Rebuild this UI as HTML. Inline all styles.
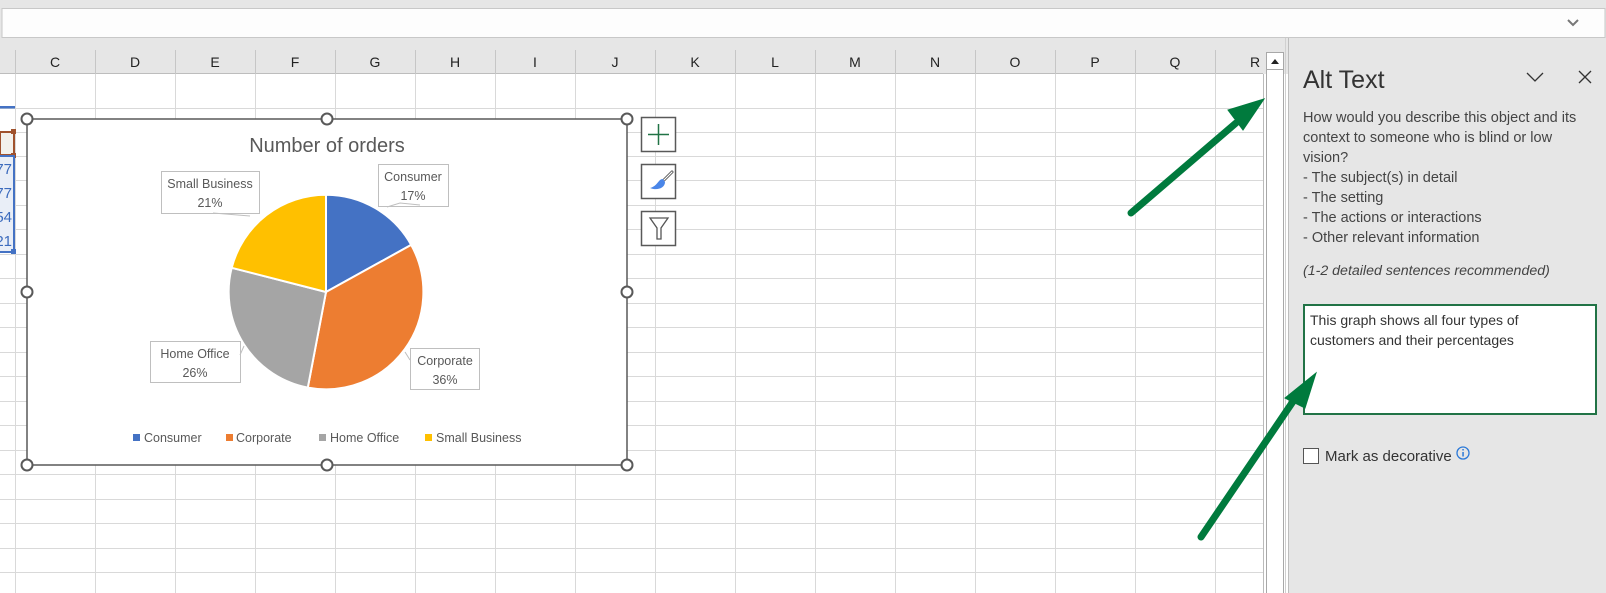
<!DOCTYPE html>
<html><head><meta charset="utf-8"><style>
html,body{margin:0;padding:0;width:1606px;height:593px;overflow:hidden;background:#fff;font-family:"Liberation Sans",sans-serif}
svg{display:block}
</style></head><body>
<svg width="1606" height="593" viewBox="0 0 1606 593" xmlns="http://www.w3.org/2000/svg" font-family="Liberation Sans, sans-serif">
<rect x="0" y="0" width="1606" height="74" fill="#e6e6e6"/>
<rect x="2" y="8.5" width="1603" height="29" fill="#fdfdfd" stroke="#c8c8c8"/>
<path d="M1568 20 l5 5 l5 -5" fill="none" stroke="#777" stroke-width="2"/>
<line x1="0" y1="73.5" x2="1263" y2="73.5" stroke="#bdbdbd"/>
<g stroke="#c6c6c6">
<line x1="15.5" y1="50" x2="15.5" y2="74"/><line x1="95.5" y1="50" x2="95.5" y2="74"/><line x1="175.5" y1="50" x2="175.5" y2="74"/><line x1="255.5" y1="50" x2="255.5" y2="74"/><line x1="335.5" y1="50" x2="335.5" y2="74"/><line x1="415.5" y1="50" x2="415.5" y2="74"/><line x1="495.5" y1="50" x2="495.5" y2="74"/><line x1="575.5" y1="50" x2="575.5" y2="74"/><line x1="655.5" y1="50" x2="655.5" y2="74"/><line x1="735.5" y1="50" x2="735.5" y2="74"/><line x1="815.5" y1="50" x2="815.5" y2="74"/><line x1="895.5" y1="50" x2="895.5" y2="74"/><line x1="975.5" y1="50" x2="975.5" y2="74"/><line x1="1055.5" y1="50" x2="1055.5" y2="74"/><line x1="1135.5" y1="50" x2="1135.5" y2="74"/><line x1="1215.5" y1="50" x2="1215.5" y2="74"/>
</g>
<g font-size="14" fill="#222" text-anchor="middle">
<text x="55" y="67">C</text><text x="135" y="67">D</text><text x="215" y="67">E</text><text x="295" y="67">F</text><text x="375" y="67">G</text><text x="455" y="67">H</text><text x="535" y="67">I</text><text x="615" y="67">J</text><text x="695" y="67">K</text><text x="775" y="67">L</text><text x="855" y="67">M</text><text x="935" y="67">N</text><text x="1015" y="67">O</text><text x="1095" y="67">P</text><text x="1175" y="67">Q</text><text x="1255" y="67">R</text>
</g>
<g stroke="#d9d9d9">
<line x1="15.5" y1="74" x2="15.5" y2="593"/><line x1="95.5" y1="74" x2="95.5" y2="593"/><line x1="175.5" y1="74" x2="175.5" y2="593"/><line x1="255.5" y1="74" x2="255.5" y2="593"/><line x1="335.5" y1="74" x2="335.5" y2="593"/><line x1="415.5" y1="74" x2="415.5" y2="593"/><line x1="495.5" y1="74" x2="495.5" y2="593"/><line x1="575.5" y1="74" x2="575.5" y2="593"/><line x1="655.5" y1="74" x2="655.5" y2="593"/><line x1="735.5" y1="74" x2="735.5" y2="593"/><line x1="815.5" y1="74" x2="815.5" y2="593"/><line x1="895.5" y1="74" x2="895.5" y2="593"/><line x1="975.5" y1="74" x2="975.5" y2="593"/><line x1="1055.5" y1="74" x2="1055.5" y2="593"/><line x1="1135.5" y1="74" x2="1135.5" y2="593"/><line x1="1215.5" y1="74" x2="1215.5" y2="593"/><line x1="1263.5" y1="74" x2="1263.5" y2="593" stroke="#bbb"/>
<line x1="0" y1="108.5" x2="1263" y2="108.5"/><line x1="0" y1="132.5" x2="1263" y2="132.5"/><line x1="0" y1="156.5" x2="1263" y2="156.5"/><line x1="0" y1="180.5" x2="1263" y2="180.5"/><line x1="0" y1="205.5" x2="1263" y2="205.5"/><line x1="0" y1="229.5" x2="1263" y2="229.5"/><line x1="0" y1="254.5" x2="1263" y2="254.5"/><line x1="0" y1="278.5" x2="1263" y2="278.5"/><line x1="0" y1="303.5" x2="1263" y2="303.5"/><line x1="0" y1="327.5" x2="1263" y2="327.5"/><line x1="0" y1="352.5" x2="1263" y2="352.5"/><line x1="0" y1="376.5" x2="1263" y2="376.5"/><line x1="0" y1="401.5" x2="1263" y2="401.5"/><line x1="0" y1="425.5" x2="1263" y2="425.5"/><line x1="0" y1="450.5" x2="1263" y2="450.5"/><line x1="0" y1="474.5" x2="1263" y2="474.5"/><line x1="0" y1="499.5" x2="1263" y2="499.5"/><line x1="0" y1="523.5" x2="1263" y2="523.5"/><line x1="0" y1="548.5" x2="1263" y2="548.5"/><line x1="0" y1="572.5" x2="1263" y2="572.5"/>
</g>
<rect x="0" y="106" width="15" height="2.5" fill="#4472c4"/>
<rect x="0" y="132" width="14" height="23" fill="#f3f1ec" stroke="#a0522d" stroke-width="2"/>
<rect x="11" y="129" width="5" height="5" fill="#a0522d"/><rect x="11" y="153" width="5" height="5" fill="#a0522d"/>
<rect x="0" y="157" width="13" height="94" fill="#e9eef7"/>
<path d="M0 156 H14 V252 H0" fill="none" stroke="#4472c4" stroke-width="2"/>
<rect x="11" y="249" width="5" height="5" fill="#4472c4"/>
<g font-size="15" fill="#3c6bbd" text-anchor="end"><text x="12" y="174">77</text><text x="12" y="198">77</text><text x="12" y="222">54</text><text x="12" y="246">21</text></g>
<rect x="27" y="119" width="600" height="346" fill="#fff" stroke="#595959" stroke-width="1.5"/>
<text x="327" y="152" font-size="20" fill="#595959" text-anchor="middle">Number of orders</text>
<g stroke="#fff" stroke-width="2">
<path d="M326 292 L326 194.7 A97.3 97.3 0 0 1 411.2 244.9 Z" fill="#4472c4"/>
<path d="M326 292 L411.2 244.9 A97.3 97.3 0 0 1 307.8 387.6 Z" fill="#ed7d31"/>
<path d="M326 292 L307.8 387.6 A97.3 97.3 0 0 1 231.7 267.8 Z" fill="#a5a5a5"/>
<path d="M326 292 L231.7 267.8 A97.3 97.3 0 0 1 326 194.7 Z" fill="#ffc000"/>
</g>
<g fill="#fff" stroke="#bfbfbf">
<rect x="378.5" y="164.5" width="70" height="42"/>
<rect x="161.5" y="171.5" width="98" height="42"/>
<rect x="150.5" y="341.5" width="90" height="41"/>
<rect x="410.5" y="348.5" width="69" height="41"/>
</g>
<g stroke="#bfbfbf" fill="none"><path d="M387 207 L400 203 L420 205"/><path d="M213 213 L250 216"/><path d="M240 355 L244 346"/><path d="M410 360 L405 352"/></g>
<g font-size="12.5" fill="#595959" text-anchor="middle">
<text x="413" y="181">Consumer</text><text x="413" y="200">17%</text>
<text x="210" y="188">Small Business</text><text x="210" y="207">21%</text>
<text x="195" y="358">Home Office</text><text x="195" y="377">26%</text>
<text x="445" y="365">Corporate</text><text x="445" y="384">36%</text>
</g>
<g font-size="12.5" fill="#595959">
<rect x="133" y="434" width="7" height="7" fill="#4472c4"/><text x="144" y="442">Consumer</text>
<rect x="226" y="434" width="7" height="7" fill="#ed7d31"/><text x="236" y="442">Corporate</text>
<rect x="319" y="434" width="7" height="7" fill="#a5a5a5"/><text x="330" y="442">Home Office</text>
<rect x="425" y="434" width="7" height="7" fill="#ffc000"/><text x="436" y="442">Small Business</text>
</g>
<g fill="#fff" stroke="#595959" stroke-width="2">
<circle cx="27" cy="119" r="5.5"/><circle cx="327" cy="119" r="5.5"/><circle cx="627" cy="119" r="5.5"/>
<circle cx="27" cy="292" r="5.5"/><circle cx="627" cy="292" r="5.5"/>
<circle cx="27" cy="465" r="5.5"/><circle cx="327" cy="465" r="5.5"/><circle cx="627" cy="465" r="5.5"/>
</g>
<g fill="#fff" stroke="#595959" stroke-width="1.5">
<rect x="641.5" y="117.5" width="34" height="34"/><rect x="641.5" y="164.5" width="34" height="34"/><rect x="641.5" y="211.5" width="34" height="34"/>
</g>
<path d="M648 134.5 H669 M658.5 124 V145" stroke="#217346" stroke-width="1.5"/>
<path d="M664 180 L672 172" stroke="#555" stroke-width="3" stroke-linecap="round"/>
<path d="M664 180 L672 172" stroke="#fff" stroke-width="1.2" stroke-linecap="round"/>
<path d="M663 179 C658 179 658 186 650 188 C657 191 665 188 665 182 Z" fill="#4a86e8"/>
<path d="M650 218 H668 L661 228 V239 H657 V228 Z" fill="#fff" stroke="#555" stroke-width="1.3"/>
<rect x="1266.5" y="52.5" width="17" height="541" fill="#fff" stroke="#a8a8a8"/>
<rect x="1266.5" y="52.5" width="17" height="17" fill="#fff" stroke="#a8a8a8"/>
<path d="M1271 64 L1275 59 L1279 64 Z" fill="#222"/>
<rect x="1288" y="38" width="318" height="555" fill="#e6e6e6"/>
<line x1="1288.5" y1="38" x2="1288.5" y2="593" stroke="#bdbdbd"/>
<line x1="1285.5" y1="38" x2="1285.5" y2="593" stroke="#d0d0d0"/>
<text x="1303" y="88" font-size="25" fill="#333">Alt Text</text>
<path d="M1527 73 L1535 81 L1543 73" fill="none" stroke="#333" stroke-width="1.3"/>
<path d="M1579 71 L1591 83 M1591 71 L1579 83" stroke="#333" stroke-width="1.3"/>
<g font-size="14.5" fill="#444">
<text x="1303" y="122">How would you describe this object and its</text>
<text x="1303" y="142">context to someone who is blind or low</text>
<text x="1303" y="162">vision?</text>
<text x="1303" y="182">- The subject(s) in detail</text>
<text x="1303" y="202">- The setting</text>
<text x="1303" y="222">- The actions or interactions</text>
<text x="1303" y="242">- Other relevant information</text>
<text x="1303" y="275" font-style="italic" font-size="14.2">(1-2 detailed sentences recommended)</text>
</g>
<rect x="1304" y="305" width="292" height="109" fill="#fff" stroke="#217346" stroke-width="2"/>
<g font-size="14" fill="#333"><text x="1310" y="325">This graph shows all four types of</text><text x="1310" y="345">customers and their percentages</text></g>
<rect x="1303.5" y="448.5" width="15" height="15" fill="#fff" stroke="#555"/>
<text x="1325" y="461" font-size="15" fill="#333">Mark as decorative</text>
<circle cx="1463" cy="453" r="6" fill="none" stroke="#2b79d8" stroke-width="1.3"/>
<rect x="1462.3" y="452" width="1.5" height="4.5" fill="#2b79d8"/><rect x="1462.3" y="449" width="1.5" height="1.5" fill="#2b79d8"/>
<g fill="#007a3d" stroke="#007a3d">
<path d="M1131 213 L1236 123" stroke-width="7" stroke-linecap="round"/>
<path d="M1264 99 L1228 110 L1243 130 Z" stroke-width="1"/>
<path d="M1201 537 L1294 400" stroke-width="7" stroke-linecap="round"/>
<path d="M1316 373 L1285 398 L1305 408 Z" stroke-width="1"/>
</g>
</svg>
</body></html>
